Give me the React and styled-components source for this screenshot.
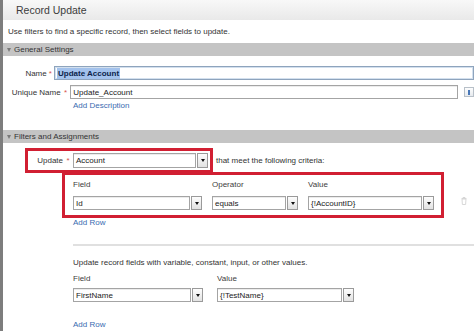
import React from "react";
import styled, { createGlobalStyle } from "styled-components";

const GlobalStyle = createGlobalStyle`
  body {
    margin: 0;
    background: #fff;
    font-family: "Liberation Sans", Arial, sans-serif;
    font-size: 8px;
    color: #333;
  }
`;

const Page = styled.div`
  width: 474px;
  height: 331px;
  overflow: hidden;
  box-sizing: border-box;
  border-left: 3px solid #7d7d7d;
  background: #fff;
`;

const TitleBar = styled.div`
  height: 20px;
  line-height: 20px;
  padding-left: 13px;
  font-size: 10.5px;
  color: #3c3c3c;
  background: linear-gradient(to bottom, #f8f8f8, #e9e9e9);
`;

const Intro = styled.div`
  height: 23px;
  line-height: 23px;
  padding-left: 5px;
  color: #333;
`;

const SectionHeader = styled.div`
  display: flex;
  align-items: center;
  height: 13px;
  padding-left: 4px;
  background: #c4c4c4;
  color: #333;
  margin-top: ${(p) => p.$top || 0}px;
`;

const Caret = styled.span`
  width: 0;
  height: 0;
  border-left: 2.5px solid transparent;
  border-right: 2.5px solid transparent;
  border-top: 4px solid #7a7a7a;
  margin-right: 3px;
`;

const FormRow = styled.div`
  display: flex;
  align-items: center;
  height: 14px;
  margin-top: ${(p) => p.$top || 0}px;
`;

const Label = styled.div`
  width: ${(p) => p.$w || 60}px;
  text-align: right;
  color: #333;
  white-space: nowrap;
`;

const Req = styled.span`
  width: 10px;
  text-align: center;
  color: #d9534f;
  font-size: 8px;
`;

const TextBox = styled.div`
  box-sizing: border-box;
  height: ${(p) => p.$h || 14}px;
  width: ${(p) => (p.$w ? `${p.$w}px` : "auto")};
  flex: ${(p) => (p.$w ? "none" : 1)};
  display: flex;
  align-items: center;
  padding-left: 2px;
  border: 1px solid ${(p) => (p.$focus ? "#8ea4bd" : "#a4a4a4")};
  box-shadow: ${(p) => (p.$focus ? "inset 0 0 0 1px #d3e0ee" : "inset 0 1px 0 #ececec")};
  background: #fff;
  color: #222;
  white-space: nowrap;
  overflow: hidden;
`;

const Selected = styled.span`
  background: #a3c2ec;
  color: #0c1f4a;
  font-weight: bold;
  padding: 1px 1px;
`;

const InfoButton = styled.div`
  box-sizing: border-box;
  width: 10px;
  height: 10px;
  margin-left: 6px;
  border: 1px solid #b8c0c8;
  background: linear-gradient(#fdfdfd, #e6eaee);
  display: flex;
  align-items: center;
  justify-content: center;
  &::after {
    content: "";
    width: 2px;
    height: 5px;
    background: #4a78b8;
  }
`;

const LinkText = styled.div`
  color: #3a6bb0;
  line-height: 10px;
  margin-left: ${(p) => p.$left || 70}px;
  margin-top: ${(p) => p.$top || 0}px;
`;

const SelectWrap = styled.div`
  display: flex;
  gap: 1px;
  width: ${(p) => p.$w}px;
  height: ${(p) => p.$h || 14}px;
`;

const DropButton = styled.div`
  box-sizing: border-box;
  width: 11px;
  flex: none;
  border: 1px solid #9a9a9a;
  background: linear-gradient(#fdfdfd, #e2e2e2);
  display: flex;
  align-items: center;
  justify-content: center;
  &::after {
    content: "";
    border-left: 2.5px solid transparent;
    border-right: 2.5px solid transparent;
    border-top: 3px solid #111;
  }
`;

const Select = ({ value, w, h }) => (
  <SelectWrap $w={w} $h={h}>
    <TextBox $h={h}>{value}</TextBox>
    <DropButton />
  </SelectWrap>
);

const UpdateLine = styled.div`
  display: flex;
  align-items: center;
  margin-top: 5px;
  margin-left: 22px;
`;

const RedBox = styled.div`
  display: flex;
  align-items: center;
  border: 3px solid #d11f32;
  padding: 2px 2px 2px 0;
`;

const Criteria = styled.div`
  color: #333;
  margin-left: 3px;
`;

const CriteriaLine = styled.div`
  display: flex;
  align-items: flex-start;
  margin-top: -1px;
  margin-left: 59px;
`;

const CriteriaBox = styled.div`
  width: 382px;
  box-sizing: border-box;
  border: 3px solid #d11f32;
  padding: 5px 0 5px 8px;
`;

const Grid = styled.div`
  display: grid;
  grid-template-columns: ${(p) => p.$cols};
  column-gap: ${(p) => p.$gap || 10}px;
  row-gap: ${(p) => p.$rowGap || 6}px;
  margin-left: ${(p) => p.$left || 0}px;
  margin-top: ${(p) => p.$top || 0}px;
`;

const ColHead = styled.div`
  line-height: 10px;
  color: #404040;
`;

const Trash = styled.svg`
  margin-left: 17px;
  margin-top: 25px;
`;

const Divider = styled.div`
  height: 2px;
  background: #e0e0e0;
  margin: 16px 0 0 70px;
`;

const Note = styled.div`
  line-height: 10px;
  margin: 12px 0 0 70px;
  color: #333;
`;

export default function App() {
  return (
    <>
      <GlobalStyle />
      <Page>
        <TitleBar>Record Update</TitleBar>
        <Intro>Use filters to find a specific record, then select fields to update.</Intro>

        <SectionHeader>
          <Caret />
          General Settings
        </SectionHeader>
        <FormRow $top={10}>
          <Label>Name</Label>
          <Req>*</Req>
          <TextBox $w={420} $focus>
            <Selected>Update Account</Selected>
          </TextBox>
        </FormRow>
        <FormRow $top={5}>
          <Label>Unique Name</Label>
          <Req>*</Req>
          <TextBox $w={388}>Update_Account</TextBox>
          <InfoButton />
        </FormRow>
        <LinkText $top={2}>Add Description</LinkText>

        <SectionHeader $top={19}>
          <Caret />
          Filters and Assignments
        </SectionHeader>
        <UpdateLine>
          <RedBox>
            <Label $w={35}>Update</Label>
            <Req>*</Req>
            <Select value="Account" w={135} h={15} />
          </RedBox>
          <Criteria>that meet the following criteria:</Criteria>
        </UpdateLine>
        <CriteriaLine>
          <CriteriaBox>
            <Grid $cols="129px 86px 126px">
              <ColHead>Field</ColHead>
              <ColHead>Operator</ColHead>
              <ColHead>Value</ColHead>
              <Select value="Id" w={129} />
              <Select value="equals" w={86} />
              <Select value="{!AccountID}" w={126} />
            </Grid>
          </CriteriaBox>
          <Trash width="6" height="8" viewBox="0 0 6 8">
            <path d="M0.5 1.5h5M2 1.5V0.5h2v1M1 2h4l-0.4 5.5H1.4z" fill="none" stroke="#d4d4d4" strokeWidth="0.9" />
          </Trash>
        </CriteriaLine>
        <LinkText>Add Row</LinkText>

        <Divider />
        <Note>Update record fields with variable, constant, input, or other values.</Note>
        <Grid $cols="130px 137px" $gap={14} $rowGap={4} $left={70} $top={6}>
          <ColHead>Field</ColHead>
          <ColHead>Value</ColHead>
          <Select value="FirstName" w={130} />
          <Select value="{!TestName}" w={137} />
        </Grid>
        <LinkText $top={18}>Add Row</LinkText>
      </Page>
    </>
  );
}
